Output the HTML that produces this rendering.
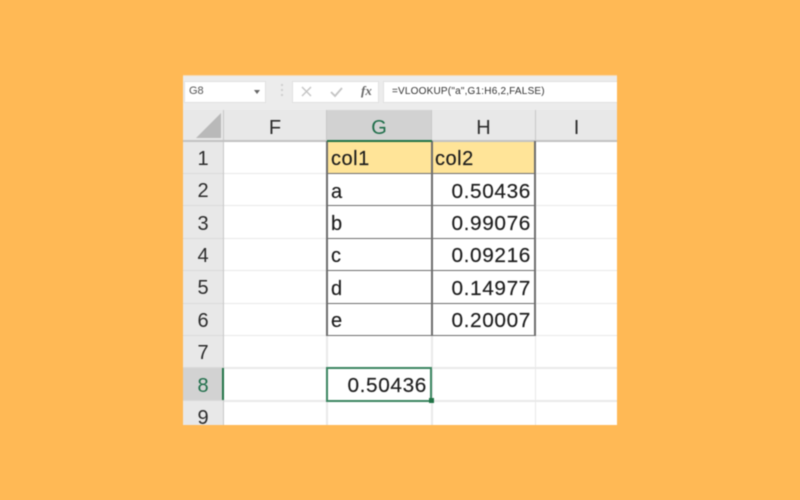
<!DOCTYPE html>
<html><head><meta charset="utf-8">
<style>
html,body{margin:0;padding:0;width:800px;height:500px;overflow:hidden;background:#ffb955}
#p{position:absolute;left:183px;top:75px;width:434px;height:350px;background:#fff;overflow:hidden;font-family:"Liberation Sans",sans-serif;color:#1c1c1c;filter:blur(.4px)}
#p div{position:absolute;box-sizing:border-box}
.t{font-size:20px;line-height:32px;white-space:nowrap;height:32px;-webkit-text-stroke:.15px #1c1c1c}
.n{text-align:right;letter-spacing:.6px;transform:scaleX(1.04);transform-origin:right center}
.rh{left:0;width:40px;text-align:center;font-size:20px;line-height:32px;height:32px;color:#2c2c2c}
.ch{top:35px;height:31px;text-align:center;font-size:20px;line-height:36px;color:#2c2c2c}
.g{background:#e9e9e9}
.h{background:#dadada;left:0;width:40px;height:1px}
.b{background:#6e6e6e}
</style></head><body>
<div id="p">
<div style="left:0;top:0;width:434px;height:35px;background:#ececec"></div>
<div style="left:0;top:0;width:434px;height:1px;background:#f5d9b0"></div>
<div style="left:1px;top:6px;width:82px;height:22px;background:#fff;border:1px solid #e0e0e0"></div>
<div style="left:6px;top:9px;font-size:11px;line-height:14px;color:#555">G8</div>
<div style="left:71px;top:15px;width:0;height:0;border-left:3.5px solid transparent;border-right:3.5px solid transparent;border-top:4px solid #666"></div>
<div style="left:98px;top:9px;width:2px;height:2px;background:#cfcfcf"></div>
<div style="left:98px;top:14px;width:2px;height:2px;background:#cfcfcf"></div>
<div style="left:98px;top:19px;width:2px;height:2px;background:#cfcfcf"></div>
<div style="left:109px;top:6px;width:87px;height:22px;background:#fff;border:1px solid #e0e0e0"></div>
<svg style="position:absolute;left:0;top:0" width="434" height="35">
<path d="M119 12L128 21M128 12L119 21" stroke="#c4c4c4" stroke-width="1.4" fill="none"/>
<path d="M148 17L152 21L159 13" stroke="#c4c4c4" stroke-width="1.8" fill="none"/>
</svg>
<div style="left:178px;top:8px;font:italic bold 13px/16px 'Liberation Serif',serif;color:#666">fx</div>
<div style="left:200px;top:6px;width:234px;height:22px;background:#fff;border:1px solid #e0e0e0;border-right:0"></div>
<div style="left:209px;top:10px;font-size:10px;line-height:14px;color:#333;white-space:nowrap;letter-spacing:.02em">=VLOOKUP("a",G1:H6,2,FALSE)</div>

<div style="left:0;top:35px;width:434px;height:31px;background:#e8e8e8"></div>
<div style="left:0;top:66px;width:40px;height:284px;background:#e8e8e8"></div>
<div style="left:144px;top:35px;width:104px;height:31px;background:#d2d2d2"></div>
<div style="left:0;top:293px;width:40px;height:32px;background:#d2d2d2"></div>
<svg style="position:absolute;left:0;top:35px" width="40" height="31"><path d="M13 28L38 3V28Z" fill="#b9b9b9"/></svg>
<div style="left:40px;top:35px;width:1px;height:315px;background:#c8c8c8"></div>
<div style="left:0;top:65px;width:434px;height:2px;background:#c2c2c2"></div>
<div style="left:143px;top:35px;width:1px;height:31px;background:#c8c8c8"></div>
<div style="left:248px;top:35px;width:1px;height:31px;background:#c8c8c8"></div>
<div style="left:352px;top:35px;width:1px;height:31px;background:#c8c8c8"></div>

<div class="g" style="left:41px;top:98px;width:393px;height:1px"></div>
<div class="g" style="left:41px;top:130px;width:393px;height:1px"></div>
<div class="g" style="left:41px;top:163px;width:393px;height:1px"></div>
<div class="g" style="left:41px;top:195px;width:393px;height:1px"></div>
<div class="g" style="left:41px;top:228px;width:393px;height:1px"></div>
<div class="g" style="left:41px;top:260px;width:393px;height:1px"></div>
<div class="g" style="left:41px;top:292px;width:393px;height:2px"></div>
<div class="g" style="left:41px;top:325px;width:393px;height:2px"></div>
<div class="h" style="top:98px"></div>
<div class="h" style="top:130px"></div>
<div class="h" style="top:163px"></div>
<div class="h" style="top:195px"></div>
<div class="h" style="top:228px"></div>
<div class="h" style="top:260px"></div>
<div class="h" style="top:292px"></div>
<div class="h" style="top:325px"></div>
<div class="g" style="left:143px;top:260px;width:2px;height:90px"></div>
<div class="g" style="left:248px;top:260px;width:2px;height:90px"></div>
<div class="g" style="left:352px;top:66px;width:1px;height:284px"></div>

<div style="left:144px;top:67px;width:208px;height:31px;background:#ffe498"></div>

<div class="b" style="left:143px;top:66px;width:2px;height:195px"></div>
<div class="b" style="left:248px;top:66px;width:2px;height:195px"></div>
<div class="b" style="left:351px;top:66px;width:2px;height:195px"></div>
<div class="b" style="left:143px;top:98px;width:210px;height:1px"></div>
<div class="b" style="left:143px;top:130px;width:210px;height:1px"></div>
<div class="b" style="left:143px;top:163px;width:210px;height:1px"></div>
<div class="b" style="left:143px;top:195px;width:210px;height:1px"></div>
<div class="b" style="left:143px;top:228px;width:210px;height:1px"></div>
<div class="b" style="left:143px;top:260px;width:210px;height:1px"></div>
<div style="left:144px;top:65px;width:105px;height:2px;background:#217346"></div>
<div style="left:39px;top:293px;width:2px;height:32px;background:#217346"></div>

<div class="ch" style="left:41px;width:102px">F</div>
<div class="ch" style="left:144px;width:104px;color:#1f6e4a">G</div>
<div class="ch" style="left:249px;width:103px">H</div>
<div class="ch" style="left:353px;width:81px">I</div>

<div class="rh" style="top:68px">1</div>
<div class="rh" style="top:100px">2</div>
<div class="rh" style="top:133px">3</div>
<div class="rh" style="top:165px">4</div>
<div class="rh" style="top:197px">5</div>
<div class="rh" style="top:230px">6</div>
<div class="rh" style="top:262px">7</div>
<div class="rh" style="top:295px;color:#1f6e4a">8</div>
<div class="rh" style="top:327px">9</div>

<div class="t" style="left:148px;top:68px;letter-spacing:.5px">col1</div>
<div class="t" style="left:252px;top:68px;letter-spacing:.5px">col2</div>
<div class="t" style="left:148px;top:101px">a</div>
<div class="t" style="left:148px;top:133px">b</div>
<div class="t" style="left:148px;top:165px">c</div>
<div class="t" style="left:148px;top:198px">d</div>
<div class="t" style="left:148px;top:230px">e</div>
<div class="t n" style="left:249px;width:99px;top:101px">0.50436</div>
<div class="t n" style="left:249px;width:99px;top:133px">0.99076</div>
<div class="t n" style="left:249px;width:99px;top:165px">0.09216</div>
<div class="t n" style="left:249px;width:99px;top:198px">0.14977</div>
<div class="t n" style="left:249px;width:99px;top:230px">0.20007</div>

<div style="left:143px;top:292px;width:106px;height:35px;border:2px solid #3a8560;background:#fff"></div>
<div style="left:246px;top:323px;width:5px;height:5px;background:#217346;border:0"></div>
<div class="t n" style="left:144px;width:100px;top:295px">0.50436</div>
</div>
</body></html>
